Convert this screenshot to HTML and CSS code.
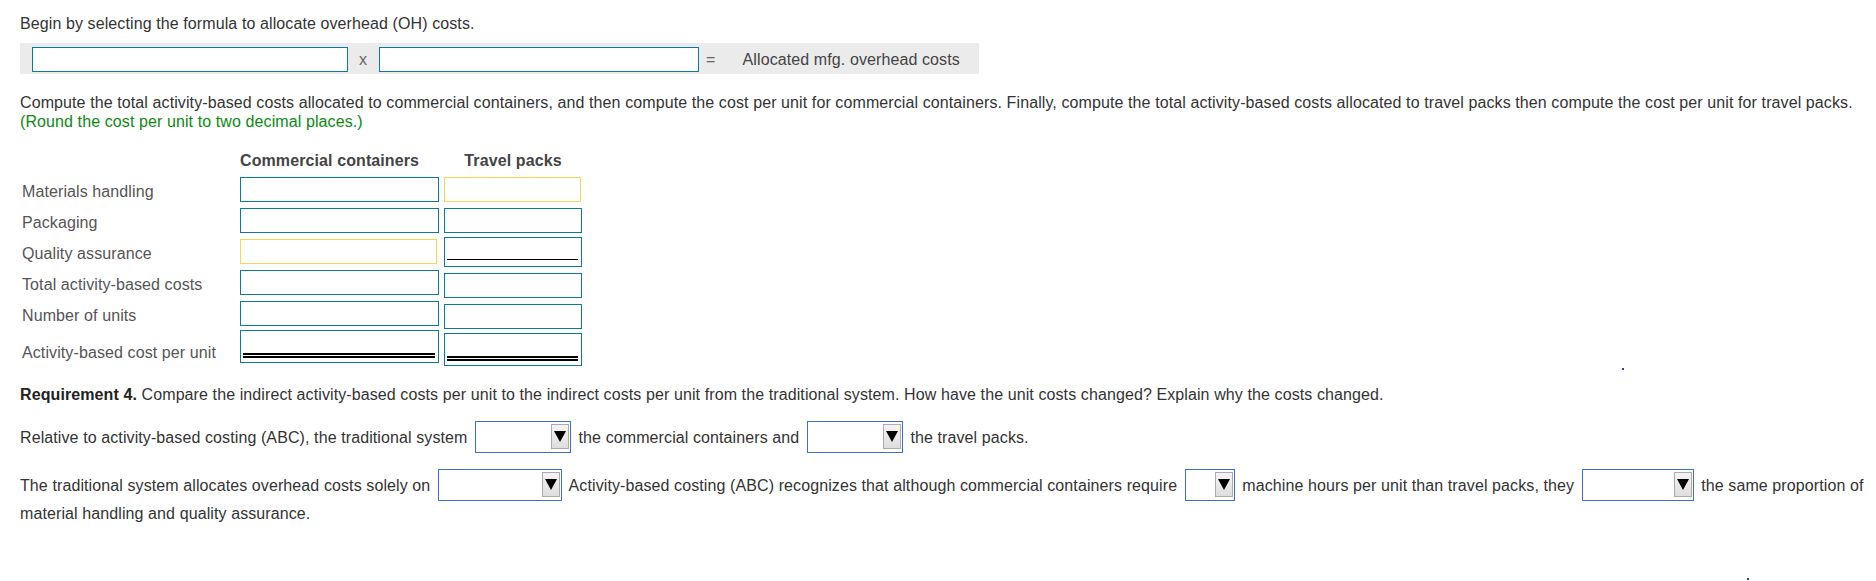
FILE: index.html
```html
<!DOCTYPE html>
<html lang="en">
<head>
    <meta charset="UTF-8">
    <title>Activity-based costing</title>
    <link rel="stylesheet" href="styles.css">
</head>
<body>
    <div class="page">
        <p class="intro">Begin by selecting the formula to allocate overhead (OH) costs.</p>

        <div class="formula">
            <input type="text" class="box teal formula-a">
            <span class="op op-x">x</span>
            <input type="text" class="box teal formula-b">
            <span class="op op-eq">=</span>
            <span class="formula-result">Allocated mfg. overhead costs</span>
        </div>

        <p class="compute">Compute the total activity-based costs allocated to commercial containers, and then compute the cost per unit for commercial containers. Finally, compute the total activity-based costs allocated to travel packs then compute the cost per unit for travel packs.<br>
        <span class="hint">(Round the cost per unit to two decimal places.)</span></p>

        <div class="cost-table">
            <div class="col labels">
                <div class="head"></div>
                <div class="lbl">Materials handling</div>
                <div class="lbl">Packaging</div>
                <div class="lbl">Quality assurance</div>
                <div class="lbl">Total activity-based costs</div>
                <div class="lbl">Number of units</div>
                <div class="lbl lbl-last">Activity-based cost per unit</div>
            </div>
            <div class="col commercial">
                <div class="head">Commercial containers</div>
                <div class="box teal cell"></div>
                <div class="box teal cell"></div>
                <div class="box yellow cell narrow"></div>
                <div class="box teal cell"></div>
                <div class="box teal cell"></div>
                <div class="box teal cell tall tight"><div class="rule-double"></div></div>
            </div>
            <div class="col travel">
                <div class="head">Travel packs</div>
                <div class="box yellow cell narrow"></div>
                <div class="box teal cell"></div>
                <div class="box teal cell mid tight"><div class="rule-single"></div></div>
                <div class="box teal cell"></div>
                <div class="box teal cell"></div>
                <div class="box teal cell tall tight"><div class="rule-double"></div></div>
            </div>
        </div>

        <p class="req"><b>Requirement 4.</b> Compare the indirect activity-based costs per unit to the indirect costs per unit from the traditional system. How have the unit costs changed? Explain why the costs changed.</p>

        <p class="answer first">Relative to activity-based costing (ABC), the traditional system <span class="dd w96"><span class="dd-btn"><svg width="12" height="11" viewBox="0 0 12 11"><polygon points="0,0 12,0 6,11" fill="#000"/></svg></span></span> the commercial containers and <span class="dd w96"><span class="dd-btn"><svg width="12" height="11" viewBox="0 0 12 11"><polygon points="0,0 12,0 6,11" fill="#000"/></svg></span></span> the travel packs.</p>

        <p class="answer second">The traditional system allocates overhead costs solely on <span class="dd w124"><span class="dd-btn"><svg width="12" height="11" viewBox="0 0 12 11"><polygon points="0,0 12,0 6,11" fill="#000"/></svg></span></span> Activity-based costing (ABC) recognizes that although commercial containers require <span class="dd w50"><span class="dd-btn"><svg width="12" height="11" viewBox="0 0 12 11"><polygon points="0,0 12,0 6,11" fill="#000"/></svg></span></span> machine hours per unit than travel packs, they <span class="dd w112"><span class="dd-btn"><svg width="12" height="11" viewBox="0 0 12 11"><polygon points="0,0 12,0 6,11" fill="#000"/></svg></span></span> the same proportion of material handling and quality assurance.</p>
    </div>

    <span class="dot dot-a"></span>
    <span class="dot dot-b"></span>
</body>
</html>
```

FILE: styles.css
```css
body {
    margin: 0;
    font-family: "Liberation Sans", Arial, sans-serif;
    font-size: 16px;
    line-height: 19px;
    letter-spacing: 0.1px;
    color: #333;
    background: #fff;
    position: relative;
    min-height: 581px;
}

.page {
    padding: 14px 0 0 20px;
}

p {
    margin: 0;
}

/* formula bar */
.formula {
    display: flex;
    align-items: center;
    width: fit-content;
    margin-top: 10px;
    padding: 4px 19px 2px 12px;
    background: #ebebeb;
}

.box {
    box-sizing: border-box;
    height: 25px;
    background: #fff;
    border: 1px solid #0d799b;
    margin: 0;
    padding: 0;
    font: inherit;
}

.box.yellow {
    border-color: #f6d654;
}

.formula-a {
    width: 316px;
}

.formula-b {
    width: 320px;
}

.op {
    color: #666;
}

.op-x {
    margin: 0 12px 0 11px;
}

.op-eq {
    margin: 0 27px 0 7px;
}

.formula-result {
    color: #444;
}

.compute {
    margin-top: 19px;
}

.hint {
    color: #0b8a12;
}

/* cost table */
.cost-table {
    display: grid;
    grid-template-columns: 215px 199px 138px;
    column-gap: 5px;
    margin-top: 20px;
}

.col {
    display: flex;
    flex-direction: column;
    gap: 6px;
}

.head {
    height: 19px;
    margin-bottom: 1px;
    font-weight: bold;
    color: #444;
}

.travel .head {
    text-align: center;
}

.labels {
    gap: 0;
}

.labels .head {
    margin-bottom: 6px;
}

.lbl {
    height: 31px;
    line-height: 31px;
    padding-left: 2px;
    color: #555;
    white-space: nowrap;
}

.lbl-last {
    margin-top: 6px;
}

.cell {
    width: 100%;
}

.commercial .cell.narrow {
    width: 197px;
}

.travel .cell.narrow {
    width: 137px;
}

.cell.tight {
    margin-top: -2px;
}

.cell.mid {
    height: 30px;
    display: flex;
    flex-direction: column;
    justify-content: flex-end;
    padding: 0 3px 6px 2px;
}

.cell.tall {
    height: 33px;
    display: flex;
    flex-direction: column;
    justify-content: flex-end;
    padding: 0 3px 4px 2px;
}

.rule-single {
    height: 0;
    border-top: 1px solid #000;
}

.rule-double {
    height: 1px;
    border-top: 2px solid #000;
    border-bottom: 2px solid #000;
}

/* requirement 4 */
.req {
    margin-top: 17px;
}

.req b {
    color: #222;
}

.answer.first {
    margin-top: 17px;
}

.answer.second {
    margin-top: 13px;
}

.dd {
    box-sizing: border-box;
    display: inline-flex;
    justify-content: flex-end;
    align-items: flex-start;
    height: 32px;
    margin: 0 3px 3px;
    padding: 2px 1px 0 0;
    vertical-align: middle;
    border: 1px solid #3b6fcd;
    background: #fff;
}

.w96 { width: 96px; }
.w124 { width: 124px; }
.w50 { width: 50px; }
.w112 { width: 112px; }

.dd-btn {
    box-sizing: border-box;
    display: flex;
    align-items: center;
    justify-content: center;
    width: 18px;
    height: 25px;
    border: 1px solid #ababab;
    background: linear-gradient(#f4f4f4, #dedede);
}

.dot {
    position: absolute;
    width: 2px;
    height: 2px;
    background: #3030e0;
}

.dot-a {
    left: 1622px;
    top: 368px;
}

.dot-b {
    left: 1747px;
    top: 578px;
}
```
